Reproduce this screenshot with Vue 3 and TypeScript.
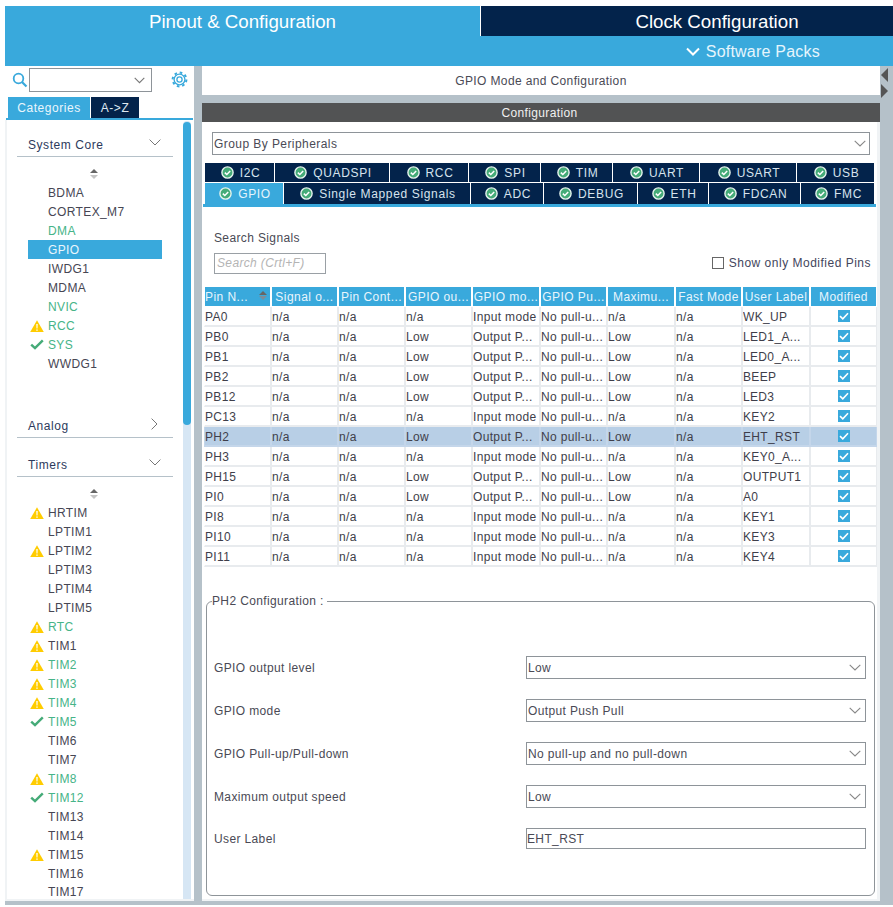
<script setup lang="ts">
type Mark = '' | 'warn' | 'ok'
interface Item { name: string; green?: boolean; mark?: Mark; selected?: boolean }

const core: Item[] = [
  { name: 'BDMA' }, { name: 'CORTEX_M7' }, { name: 'DMA', green: true },
  { name: 'GPIO', selected: true }, { name: 'IWDG1' }, { name: 'MDMA' },
  { name: 'NVIC', green: true }, { name: 'RCC', green: true, mark: 'warn' },
  { name: 'SYS', green: true, mark: 'ok' }, { name: 'WWDG1' },
]
const timers: Item[] = [
  { name: 'HRTIM', mark: 'warn' }, { name: 'LPTIM1' }, { name: 'LPTIM2', mark: 'warn' },
  { name: 'LPTIM3' }, { name: 'LPTIM4' }, { name: 'LPTIM5' },
  { name: 'RTC', green: true, mark: 'warn' }, { name: 'TIM1', mark: 'warn' },
  { name: 'TIM2', green: true, mark: 'warn' }, { name: 'TIM3', green: true, mark: 'warn' },
  { name: 'TIM4', green: true, mark: 'warn' }, { name: 'TIM5', green: true, mark: 'ok' },
  { name: 'TIM6' }, { name: 'TIM7' }, { name: 'TIM8', green: true, mark: 'warn' },
  { name: 'TIM12', green: true, mark: 'ok' }, { name: 'TIM13' }, { name: 'TIM14' },
  { name: 'TIM15', mark: 'warn' }, { name: 'TIM16' }, { name: 'TIM17' },
]
const tabRow1 = [
  { n: 'I2C', w: 70 }, { n: 'QUADSPI', w: 115 }, { n: 'RCC', w: 79 }, { n: 'SPI', w: 72 },
  { n: 'TIM', w: 72 }, { n: 'UART', w: 87 }, { n: 'USART', w: 97 }, { n: 'USB', w: 78 },
]
const tabRow2 = [
  { n: 'GPIO', w: 79, active: true }, { n: 'Single Mapped Signals', w: 187 }, { n: 'ADC', w: 73 },
  { n: 'DEBUG', w: 94 }, { n: 'ETH', w: 71 }, { n: 'FDCAN', w: 92 }, { n: 'FMC', w: 74 },
]
const colWidths = [67, 67, 67, 67, 68, 67, 68, 67, 68, 67]
const headers = ['Pin N...', 'Signal o...', 'Pin Cont...', 'GPIO ou...', 'GPIO mo...', 'GPIO Pu...', 'Maximu...', 'Fast Mode', 'User Label', 'Modified']

const out = (pin: string, label: string) => [pin, 'n/a', 'n/a', 'Low', 'Output P...', 'No pull-u...', 'Low', 'n/a', label]
const inp = (pin: string, label: string) => [pin, 'n/a', 'n/a', 'n/a', 'Input mode', 'No pull-u...', 'n/a', 'n/a', label]
const rows = [
  inp('PA0', 'WK_UP'), out('PB0', 'LED1_A...'), out('PB1', 'LED0_A...'), out('PB2', 'BEEP'),
  out('PB12', 'LED3'), inp('PC13', 'KEY2'), out('PH2', 'EHT_RST'), inp('PH3', 'KEY0_A...'),
  out('PH15', 'OUTPUT1'), out('PI0', 'A0'), inp('PI8', 'KEY1'), inp('PI10', 'KEY3'), inp('PI11', 'KEY4'),
]
const formRows = [
  { label: 'GPIO output level', value: 'Low' },
  { label: 'GPIO mode', value: 'Output Push Pull' },
  { label: 'GPIO Pull-up/Pull-down', value: 'No pull-up and no pull-down' },
  { label: 'Maximum output speed', value: 'Low' },
]
</script>

<template>
  <div class="page">
    <header class="top">
      <div class="perspectives">
        <div class="persp active">Pinout &amp; Configuration</div>
        <div class="persp clock">Clock Configuration</div>
      </div>
      <div class="packs">
        <svg class="packs-chev" width="14" height="9" viewBox="0 0 14 9"><path d="M1 1.5 7 7.5 13 1.5" fill="none" stroke="#fff" stroke-width="2"/></svg>
        <span>Software Packs</span>
      </div>
    </header>

    <div class="body">
      <aside class="left">
        <div class="tools">
          <svg width="16" height="16" viewBox="0 0 16 16"><circle cx="6.5" cy="6.5" r="4.8" fill="none" stroke="#39a9dc" stroke-width="1.8"/><path d="M10 10 14.5 14.5" stroke="#39a9dc" stroke-width="2.2"/></svg>
          <div class="combo">
            <svg width="11" height="7" viewBox="0 0 11 7"><path d="M.7.8 5.5 5.6 10.3.8" fill="none" stroke="#777" stroke-width="1.1"/></svg>
          </div>
          <svg class="gear" width="17" height="17" viewBox="0 0 17 17">
            <circle cx="8.5" cy="8.5" r="2.6" fill="none" stroke="#39a9dc" stroke-width="1.3"/>
            <circle cx="8.5" cy="8.5" r="5.4" fill="none" stroke="#39a9dc" stroke-width="1.3"/>
            <circle cx="8.5" cy="8.5" r="6.9" fill="none" stroke="#39a9dc" stroke-width="2" stroke-dasharray="2.6 2.82"/>
          </svg>
        </div>
        <div class="cat-tabs">
          <div class="cat-tab on">Categories</div>
          <div class="cat-tab">A-&gt;Z</div>
        </div>
        <div class="scroller">
          <div class="tree">
            <div class="sec-head">
              <span>System Core</span>
              <svg width="12" height="7" viewBox="0 0 12 7"><path d="M.6.6 6 6 11.4.6" fill="none" stroke="#777" stroke-width="1"/></svg>
            </div>
            <div class="sort-row"><span class="tri-up"></span><span class="tri-down"></span></div>
            <div v-for="it in core" :key="it.name" class="item" :class="{ green: it.green, selected: it.selected }">
              <span class="slot">
                <svg v-if="it.mark === 'warn'" width="14" height="12" viewBox="0 0 14 12"><path d="M7 .3 13.8 12H.2Z" fill="#ffcc00"/><path d="M6.3 4h1.4l-.2 4.6h-1zM6.3 9.4h1.4v1.4H6.3z" fill="#fff"/></svg>
                <svg v-if="it.mark === 'ok'" width="14" height="11" viewBox="0 0 14 11"><path d="M1.2 5.6 5 9.2 12.8 1.4" fill="none" stroke="#45ab78" stroke-width="2.4"/></svg>
              </span>
              <span>{{ it.name }}</span>
            </div>

            <div class="sec-head analog">
              <span>Analog</span>
              <svg width="7" height="12" viewBox="0 0 7 12"><path d="M.6.6 6 6 .6 11.4" fill="none" stroke="#777" stroke-width="1"/></svg>
            </div>
            <div class="sec-head timers">
              <span>Timers</span>
              <svg width="12" height="7" viewBox="0 0 12 7"><path d="M.6.6 6 6 11.4.6" fill="none" stroke="#777" stroke-width="1"/></svg>
            </div>
            <div class="sort-row"><span class="tri-up"></span><span class="tri-down"></span></div>
            <div v-for="it in timers" :key="it.name" class="item" :class="{ green: it.green }">
              <span class="slot">
                <svg v-if="it.mark === 'warn'" width="14" height="12" viewBox="0 0 14 12"><path d="M7 .3 13.8 12H.2Z" fill="#ffcc00"/><path d="M6.3 4h1.4l-.2 4.6h-1zM6.3 9.4h1.4v1.4H6.3z" fill="#fff"/></svg>
                <svg v-if="it.mark === 'ok'" width="14" height="11" viewBox="0 0 14 11"><path d="M1.2 5.6 5 9.2 12.8 1.4" fill="none" stroke="#45ab78" stroke-width="2.4"/></svg>
              </span>
              <span>{{ it.name }}</span>
            </div>
          </div>
          <div class="track"><div class="thumb"></div></div>
        </div>
      </aside>

      <main class="main">
        <div class="mode-title">GPIO Mode and Configuration</div>
        <div class="conf-bar">Configuration</div>
        <div class="conf">
          <div class="select group">
            <span>Group By Peripherals</span>
            <svg width="12" height="7" viewBox="0 0 12 7"><path d="M.7.8 6 6 11.3.8" fill="none" stroke="#888" stroke-width="1.1"/></svg>
          </div>

          <div class="tabs">
            <div class="tab-row r1">
              <div v-for="t in tabRow1" :key="t.n" class="tab" :style="{ width: t.w + 'px' }">
                <svg width="13" height="13" viewBox="0 0 13 13"><circle cx="6.5" cy="6.5" r="5.6" fill="#45ab78" stroke="#e6f4ee" stroke-width="1.4"/><path d="M3.8 6.6 5.8 8.5 9.2 4.9" fill="none" stroke="#fff" stroke-width="1.5"/></svg>
                <span>{{ t.n }}</span>
              </div>
            </div>
            <div class="tab-row r2">
              <div v-for="t in tabRow2" :key="t.n" class="tab" :class="{ active: t.active }" :style="{ width: t.w + 'px' }">
                <svg width="13" height="13" viewBox="0 0 13 13"><circle cx="6.5" cy="6.5" r="5.6" fill="#45ab78" stroke="#e6f4ee" stroke-width="1.4"/><path d="M3.8 6.6 5.8 8.5 9.2 4.9" fill="none" stroke="#fff" stroke-width="1.5"/></svg>
                <span>{{ t.n }}</span>
              </div>
            </div>
          </div>

          <div class="search">
            <div class="search-left">
              <div class="search-label">Search Signals</div>
              <div class="search-input">Search (Crtl+F)</div>
            </div>
            <label class="only">
              <span class="box"></span>
              <span>Show only Modified Pins</span>
            </label>
          </div>

          <table class="grid">
            <colgroup>
              <col v-for="(w, i) in colWidths" :key="i" :style="{ width: w + 'px' }">
            </colgroup>
            <thead>
              <tr>
                <th v-for="(h, i) in headers" :key="h" :class="{ first: i === 0 }">
                  {{ h }}
                  <span v-if="i === 0" class="th-sort"><span class="tri-up"></span><span class="tri-down dark"></span></span>
                </th>
              </tr>
            </thead>
            <tbody>
              <tr v-for="r in rows" :key="r[0]" :class="{ sel: r[0] === 'PH2' }">
                <td v-for="(c, i) in r" :key="i">{{ c }}</td>
                <td class="chk">
                  <span class="cb"><svg width="10" height="8" viewBox="0 0 10 8"><path d="M1 4.2 3.8 6.8 9 1.2" fill="none" stroke="#fff" stroke-width="1.6"/></svg></span>
                </td>
              </tr>
            </tbody>
          </table>

          <fieldset class="pin-conf">
            <legend>PH2 Configuration :</legend>
            <div class="form">
              <div v-for="f in formRows" :key="f.label" class="form-row">
                <span>{{ f.label }}</span>
                <div class="select ctl">
                  <span>{{ f.value }}</span>
                  <svg width="12" height="7" viewBox="0 0 12 7"><path d="M.7.8 6 6 11.3.8" fill="none" stroke="#888" stroke-width="1.1"/></svg>
                </div>
              </div>
              <div class="form-row">
                <span>User Label</span>
                <div class="select ctl text">EHT_RST</div>
              </div>
            </div>
          </fieldset>
        </div>
      </main>

      <div class="rail">
        <svg width="9" height="31" viewBox="0 0 9 31"><path d="M8 1V15L1 8Z" fill="#555"/><path d="M1 17V31L8 24Z" fill="#555"/></svg>
      </div>
    </div>
    <div class="foot"></div>
  </div>
</template>

<style>
html, body { margin: 0; background: #fff; }
</style>

<style scoped>
.page {
  width: 893px; height: 907px; box-sizing: border-box; padding: 6px 0 0 5px; overflow: hidden;
  background: #fff; color: #4a4a55;
  font-family: "Liberation Sans", Arial, sans-serif; font-size: 12px; letter-spacing: .37px;
}
.top { height: 60px; background: #39a9dc; color: #fff; }
.perspectives { display: flex; height: 30px; }
.persp {
  display: flex; align-items: center; justify-content: center;
  font-size: 18.7px; letter-spacing: 0; height: 30px; box-sizing: border-box; padding-top: 1px;
}
.persp.active { width: 475px; background: #39a9dc; }
.persp.clock { width: 413px; background: #03234b; border-left: 1px solid #fff; padding-left: 60px; }
.packs {
  height: 30px; box-sizing: border-box; padding: 1px 73px 0 0; display: flex; align-items: center; justify-content: flex-end;
  font-size: 16px; letter-spacing: .22px; gap: 6px; color: #e6f5fc;
}
.packs-chev { display: block; }

.body { display: flex; height: 835px; background: #b5c1c9; }
.left { width: 189px; margin-right: 8px; background: #fff; display: flex; flex-direction: column; }
.tools { height: 31px; box-sizing: border-box; display: flex; padding: 2px 0 0 7px; }
.tools > svg:first-child { margin-top: 4px; }
.combo {
  width: 123px; height: 24px; box-sizing: border-box; margin-left: 1px; border: 1px solid #8e9499;
  display: flex; align-items: center; justify-content: flex-end; padding-right: 6px;
}
.gear { margin: 3px 0 0 19px; }
.cat-tabs { height: 21px; display: flex; padding-left: 3px; gap: 1px; border-bottom: 2px solid #39a9dc; margin-left: 1px; margin-right: 1px; }
.cat-tab {
  height: 21px; background: #03234b; color: #dfe8f0; letter-spacing: .55px;
  width: 48px; display: flex; align-items: center; justify-content: center;
}
.cat-tab.on { width: 82px; background: #39a9dc; color: #eaf6fc; margin-left: -1px; }
.scroller { flex: 1; min-height: 0; display: flex; border-left: 2px solid #f0f3f5; border-bottom: 2px solid #f0f3f5; }
.tree { width: 176px; height: 779px; overflow: hidden; padding-top: 13px; box-sizing: border-box; }
.track { width: 8px; margin-top: 1px; background: #d6e6f4; border-radius: 4px 4px 0 0; }
.thumb { height: 303px; margin-top: 1px; background: #39a9dc; border-radius: 4px; }

.sec-head {
  width: 156px; height: 24px; box-sizing: border-box; margin-left: 10px; padding: 0 12px 0 11px;
  border-bottom: 1px solid #b5c1c9; display: flex; align-items: center; justify-content: space-between;
  color: #2d3a5c; letter-spacing: .55px;
}
.sec-head svg { margin-top: -4px; }
.analog { margin-top: 41px; padding-right: 15px; }
.timers { margin-top: 15px; }
.sort-row { height: 26px; box-sizing: border-box; padding-top: 12px; display: flex; flex-direction: column; align-items: center; gap: 2px; width: 174px; }
.tri-up { display: block; width: 0; height: 0; border: 4px solid transparent; border-top: 0; border-bottom: 4px solid #666; }
.tri-down { display: block; width: 0; height: 0; border: 4px solid transparent; border-bottom: 0; border-top: 4px solid #c4c4c4; }
.tri-down.dark { border-top-color: #7d8d99; }
.item { width: 134px; height: 19px; margin-left: 21px; display: flex; align-items: center; color: #464653; }
.item.green { color: #46b488; }
.item.selected { background: #39a9dc; color: #eaf6fc; }
.item:last-child { height: 15px; padding-top: 3px; box-sizing: border-box; line-height: 12px; }
.slot { width: 20px; padding-left: 2px; box-sizing: border-box; display: flex; align-items: center; flex: none; }

.main { width: 678px; display: flex; flex-direction: column; }
.mode-title { height: 29px; background: #fff; display: flex; align-items: center; justify-content: center; margin-bottom: 8px; }
.conf-bar { height: 19px; box-sizing: border-box; padding-right: 3px; background: #525354; color: #f0f0f0; display: flex; align-items: center; justify-content: center; }
.conf {
  flex: 1; min-height: 0; background: #fff; box-sizing: border-box; padding-top: 10px;
  border-right: 3px solid #f0f3f5; border-bottom: 2px solid #f0f3f5;
}
.select {
  box-sizing: border-box; height: 23px; border: 1px solid #8e9499; display: flex; align-items: center;
  justify-content: space-between; padding: 0 3px 0 1px; background: #fff;
}
.ctl svg { margin-right: 1px; }
.group { width: 658px; margin-left: 10px; letter-spacing: .43px; }
.tabs { margin: 8px 0 0 1px; padding-left: 2px; border-bottom: 3px solid #39a9dc; width: 673px; box-sizing: border-box; }
.tab-row { display: flex; }
.r1 { height: 19px; margin-bottom: 1px; }
.r2 { height: 21px; }
.tab {
  box-sizing: border-box; border-right: 1px solid #fff; background: #03234b; color: #d7e3ee;
  display: flex; align-items: center; justify-content: center; gap: 6px; letter-spacing: .65px;
  flex: none; padding-left: 2px;
}
.tab.active { background: #39a9dc; color: #e6f5fc; }

.search { height: 80px; box-sizing: border-box; padding: 0 6px 13px 12px; display: flex; align-items: flex-end; justify-content: space-between; }
.search-label { height: 16px; line-height: 16px; margin-bottom: 7px; }
.search-input {
  width: 112px; height: 21px; box-sizing: border-box; border: 1px solid #9aa0a5; padding-left: 2px;
  line-height: 19px; color: #b4b4b4; font-style: italic; letter-spacing: .35px;
}
.only { display: flex; align-items: center; gap: 5px; margin-bottom: 4px; color: #43465c; letter-spacing: .5px; }
.box { width: 12px; height: 12px; box-sizing: border-box; border: 1px solid #666; }

.grid {
  table-layout: fixed; border-collapse: separate; border-spacing: 0; width: 673px; margin-left: 2px;
  font-size: 12px;
}
.grid th {
  height: 19px; padding: 0; font-weight: 400; background: #39a9dc; color: #e8f5fc; white-space: nowrap;
  overflow: hidden; border-left: 1px solid #fff; border-right: 1px solid #fff; border-bottom: 1px solid #fff;
  letter-spacing: .45px; text-align: center;
}
.grid th.first { text-align: left; position: relative; }
.th-sort { position: absolute; right: 3px; top: 4px; display: flex; flex-direction: column; gap: 1px; }
.grid td {
  height: 20px; box-sizing: border-box; padding: 1px 0 0; white-space: nowrap; overflow: hidden; color: #3e3e4a;
  border-left: 1px solid #e8ebee; border-right: 1px solid #e8ebee; border-bottom: 2px solid #e8ebee;
  letter-spacing: .34px;
}
.grid td:first-child { border-left: 1px solid #fff; }
.grid tr.sel td { background: #b8cfe6; border-bottom-color: #c4d6ea; border-left-color: #c4d6ea; border-right-color: #c4d6ea; }
.grid td.chk { text-align: center; padding-top: 0; }
.cb { display: inline-flex; width: 12px; height: 12px; background: #39a9dc; align-items: center; justify-content: center; vertical-align: middle; margin-top: -2px; }

.pin-conf {
  width: 669px; height: 303px; box-sizing: border-box; margin: 26px 0 0 4px; padding: 47px 8px 0 7px;
  border: 1px solid #8e9499; border-radius: 6px;
}
.pin-conf legend { padding: 0 3px 0 0; margin-left: -2px; height: 16px; line-height: 16px; }
.form { display: flex; flex-direction: column; gap: 20px; }
.form-row { display: flex; align-items: center; justify-content: space-between; }
.ctl { width: 340px; }
.ctl.text { height: 21px; padding-left: 0; }

.rail { width: 13px; padding: 1px 0 0 0; }
.rail svg { display: block; }
.foot { height: 4px; background: #b5c1c9; }
</style>
